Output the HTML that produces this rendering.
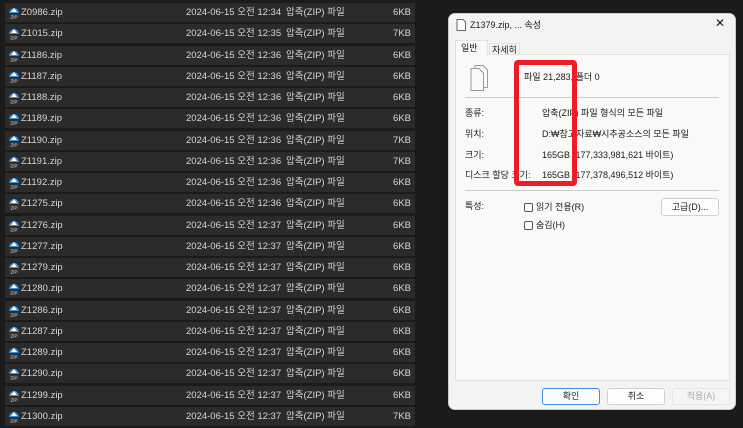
<!DOCTYPE html>
<html><head><meta charset="utf-8"><style>
*{margin:0;padding:0;box-sizing:border-box}
body{width:743px;height:428px;background:#1b1b1b;position:relative;overflow:hidden;font-family:"Liberation Sans","Noto Sans CJK KR",sans-serif;font-size:9.5px}
.row{position:absolute;left:5px;width:410px;height:19px;background:#2b2b2b;color:#d6d6d6}
.row span{position:absolute;top:0;height:19px;line-height:19px;white-space:nowrap}
.ic{position:absolute;left:3px;top:3px;width:12px;height:13px}
.dlg{position:absolute;left:448px;top:13px;width:288px;height:397px;background:#f3f3f3;border:1px solid #cfcfcf;border-radius:7px;color:#1a1a1a;font-size:9px}
.dlg span{position:absolute;white-space:nowrap;line-height:12px}
.btn{position:absolute;top:374px;width:58px;height:17px;background:#fdfdfd;border:1px solid #d0d0d0;border-radius:3px;text-align:center;line-height:15px;font-size:9px}
.cb{position:absolute;width:9px;height:9px;border:1px solid #555;border-radius:2px;background:#fff}
</style></head><body>
<div id="rows"></div>
<script>
var d=[["Z0986.zip","12:34","6KB"],["Z1015.zip","12:35","7KB"],["Z1186.zip","12:36","6KB"],["Z1187.zip","12:36","6KB"],["Z1188.zip","12:36","6KB"],["Z1189.zip","12:36","6KB"],["Z1190.zip","12:36","7KB"],["Z1191.zip","12:36","7KB"],["Z1192.zip","12:36","6KB"],["Z1275.zip","12:36","6KB"],["Z1276.zip","12:37","6KB"],["Z1277.zip","12:37","6KB"],["Z1279.zip","12:37","6KB"],["Z1280.zip","12:37","6KB"],["Z1286.zip","12:37","6KB"],["Z1287.zip","12:37","6KB"],["Z1289.zip","12:37","6KB"],["Z1290.zip","12:37","6KB"],["Z1299.zip","12:37","6KB"],["Z1300.zip","12:37","7KB"]];
var h="";d.forEach(function(r,i){var t=Math.round(3+i*21.25);h+='<div class="row" style="top:'+t+'px"><svg class="ic" viewBox="0 0 12 13"><path d="M1 7 A5 5 0 0 1 11 7Z" fill="#2f8fe0"/><path d="M6 2 L3 6 H9Z" fill="#fff"/><rect x="1" y="8" width="10" height="5" fill="#333"/><text x="6" y="12.5" font-size="4.5" fill="#ddd" text-anchor="middle" font-family="Liberation Sans">ZIP</text></svg><span style="left:16px">'+r[0]+'</span><span style="left:181px">2024-06-15 오전 '+r[1]+'</span><span style="left:281px">압축(ZIP) 파일</span><span style="right:4px">'+r[2]+'</span></div>'});
document.getElementById("rows").innerHTML=h;
</script>
<div class="dlg">
<svg style="position:absolute;left:7px;top:5px" width="10" height="12" viewBox="0 0 10 12"><path d="M1 .5H7L9.5 3V11.5H1Z" fill="#fff" stroke="#666"/></svg>
<span style="left:21px;top:5px">Z1379.zip, ... 속성</span>
<span style="right:10px;top:3px;font-size:12px">✕</span>
<div style="position:absolute;left:6px;top:40px;width:275px;height:327px;background:#f9f9f9;border:1px solid #e2e2e2"></div>
<div style="position:absolute;left:6px;top:26px;width:33px;height:15px;background:#f9f9f9;border:1px solid #e2e2e2;border-bottom:none"></div>
<span style="left:12px;top:28px">일반</span>
<div style="position:absolute;left:40px;top:29px;width:31px;height:12px;border:1px solid #e2e2e2;border-bottom:none"></div>
<span style="left:43px;top:30px">자세히</span>
<svg style="position:absolute;left:20px;top:51px" width="20" height="26" viewBox="0 0 20 26"><path d="M6 .5H14L18.5 5V22.5H6Z" fill="#fafafa" stroke="#999"/><path d="M2 3.5H10L14.5 8V25.5H2Z" fill="#fafafa" stroke="#999"/></svg>
<span style="left:75px;top:57px">파일 21,283, 폴더 0</span>
<div style="position:absolute;left:16px;top:83px;width:254px;height:1px;background:#ccc"></div>
<span style="left:16px;top:93px">종류:</span><span style="left:93px;top:93px">압축(ZIP) 파일 형식의 모든 파일</span>
<span style="left:16px;top:114px">위치:</span><span style="left:93px;top:114px">D:₩참고자료₩시추공소스의 모든 파일</span>
<span style="left:16px;top:135px">크기:</span><span style="left:93px;top:135px">165GB (177,333,981,621 바이트)</span>
<span style="left:16px;top:155px">디스크 할당 크기:</span><span style="left:93px;top:155px">165GB (177,378,496,512 바이트)</span>
<div style="position:absolute;left:16px;top:176px;width:254px;height:1px;background:#ccc"></div>
<span style="left:16px;top:186px">특성:</span>
<div class="cb" style="left:75px;top:189px"></div><span style="left:87px;top:187px">읽기 전용(R)</span>
<div class="cb" style="left:75px;top:207px"></div><span style="left:87px;top:205px">숨김(H)</span>
<div class="btn" style="left:212px;top:184px;height:18px;line-height:16px">고급(D)...</div>
<div class="btn" style="left:93px;border:1px solid #3b8ee0">확인</div>
<div class="btn" style="left:158px">취소</div>
<div class="btn" style="left:223px;color:#aaa;background:#f5f5f5;border-color:#e5e5e5">적용(A)</div>
</div>
<div style="position:absolute;left:514px;top:60px;width:63px;height:126px;border:5px solid #ee1c25;border-radius:4px"></div>
</body></html>
